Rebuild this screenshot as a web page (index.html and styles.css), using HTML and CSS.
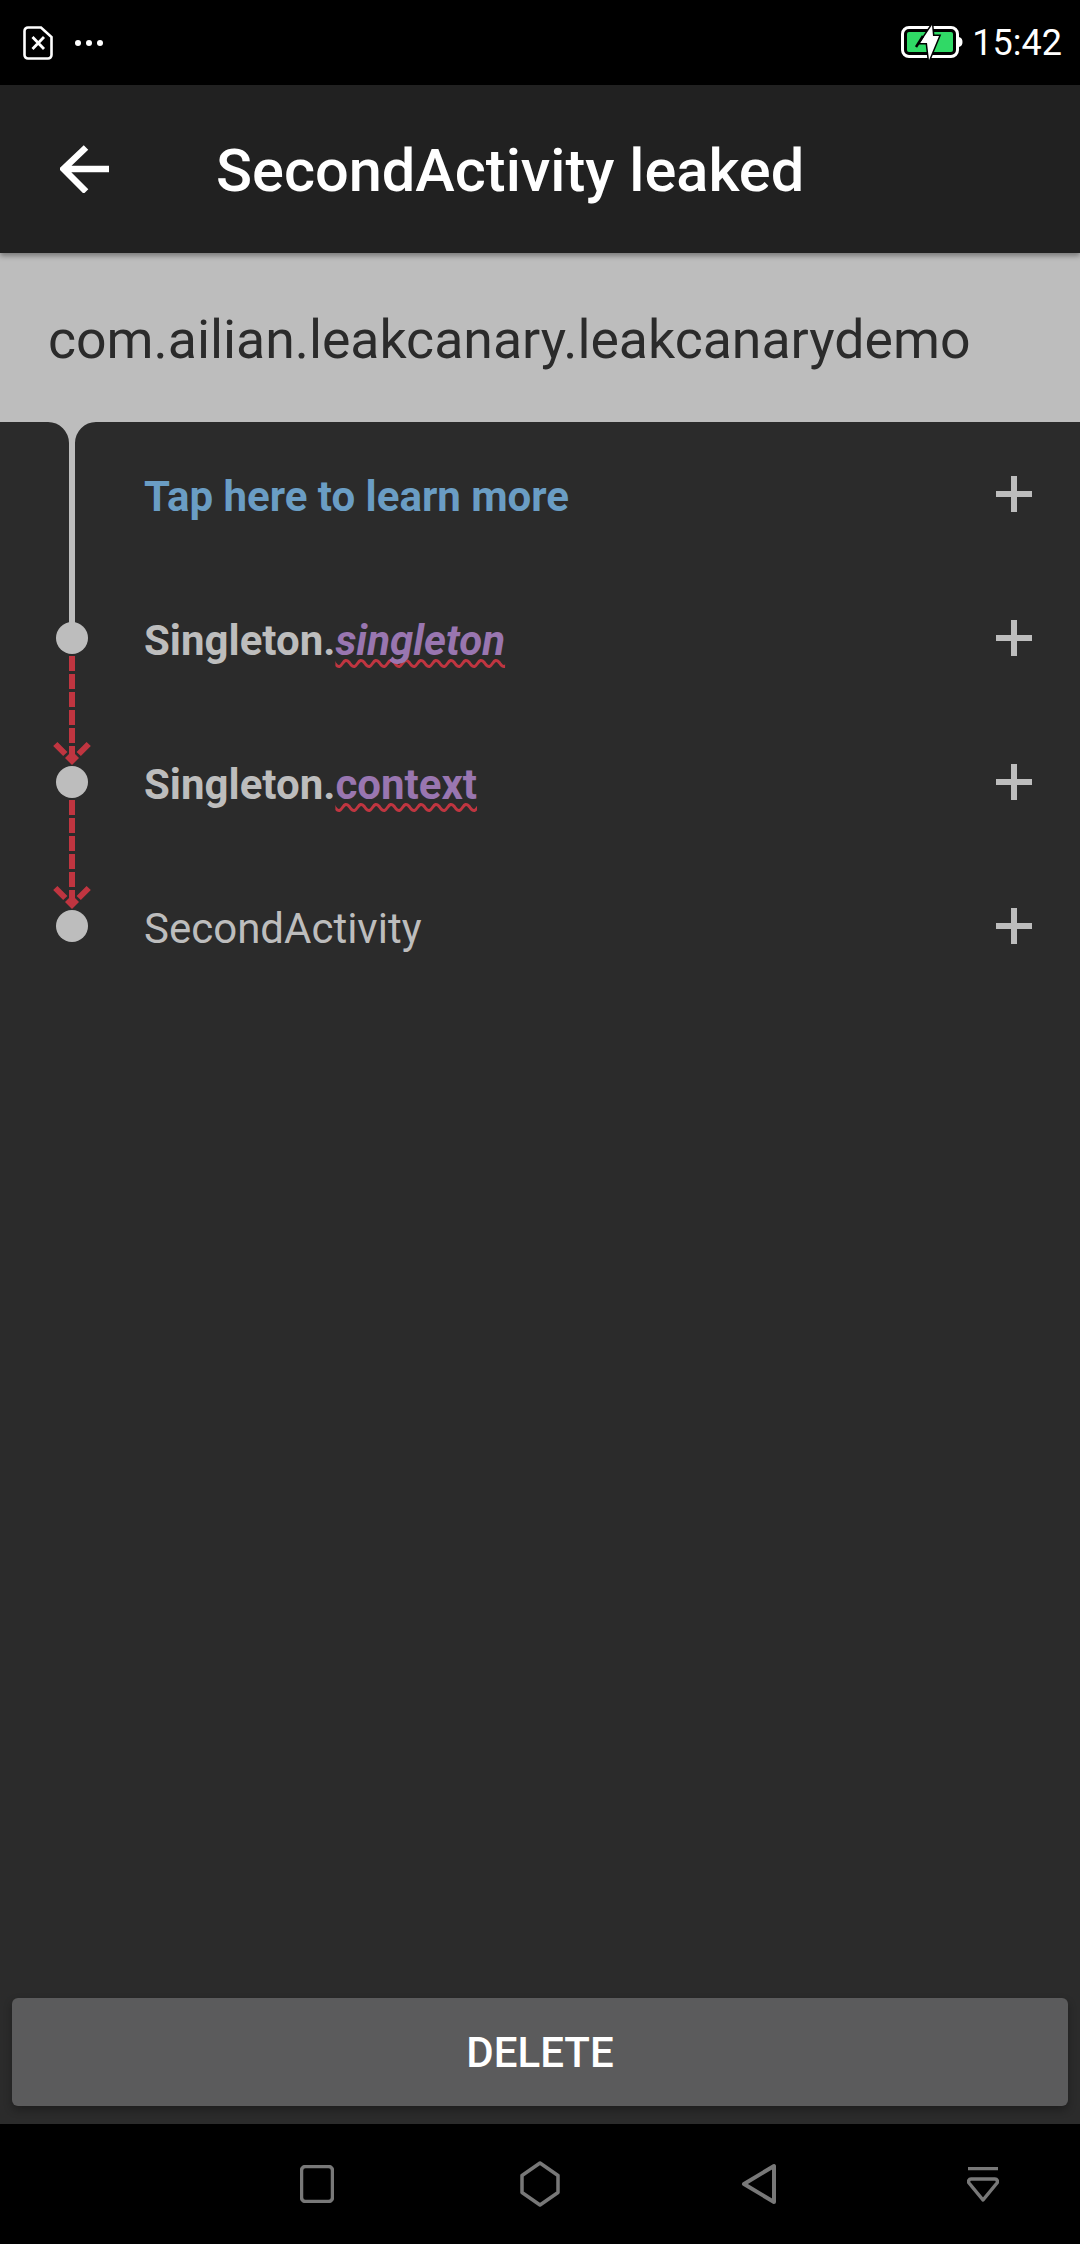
FILE: index.html
```html
<!DOCTYPE html>
<html lang="en">
<head>
<meta charset="utf-8">
<title>SecondActivity leaked</title>
<link rel="stylesheet" href="styles.css">
</head>
<body>
<div class="screen">
  <div class="status">
    <div class="status-left">
      <svg class="ic-file" width="30" height="34" viewBox="0 0 30 34"><path d="M5 1.500H18L28.500 11V29A3.500 3.500 0 0 1 25 32.500H5A3.500 3.500 0 0 1 1.500 29V5A3.500 3.500 0 0 1 5 1.500Z" fill="none" stroke="#fff" stroke-width="2.600"/><path d="M9.500 11L21 23M21 11L9.500 23" stroke="#fff" stroke-width="2.800" fill="none"/></svg>
      <svg class="ic-dots" width="30" height="8" viewBox="0 0 30 8"><circle cx="4" cy="4" r="3" fill="#fff"/><circle cx="15" cy="4" r="3" fill="#fff"/><circle cx="26" cy="4" r="3" fill="#fff"/></svg>
    </div>
    <div class="status-right">
      <svg class="ic-battery" width="62" height="36" viewBox="0 0 62 36"><rect x="1.500" y="2.500" width="55" height="29" rx="6.500" fill="none" stroke="#fff" stroke-width="3"/><rect x="6" y="7" width="46" height="20" rx="2" fill="#30d966"/><path d="M58 12C60.500 12.500 61.500 14.500 61.500 17S60.500 21.500 58 22Z" fill="#fff"/><path d="M31 0L19 18H26L28 35L38 11H32Z" fill="#fff" stroke="#000" stroke-width="3" stroke-linejoin="miter" paint-order="stroke"/><path d="M22 11L15 22" stroke="#000" stroke-width="2.500"/></svg>
      <span class="clock">15:42</span>
    </div>
  </div>
  <header class="toolbar">
    <svg class="ic-back" width="50" height="48" viewBox="0 0 50 48"><path d="M49 24H4M26 2.500L3.500 24L26 46.500" fill="none" stroke="#fff" stroke-width="6.500"/></svg>
    <h1 class="title">SecondActivity leaked</h1>
  </header>
  <div class="package">com.ailian.leakcanary.leakcanarydemo</div>
  <main class="content">
    <ul class="trace">
      <li class="row row-first">
        <svg class="rail" width="144" height="144" viewBox="0 0 144 144"><path d="M48 0A21 21 0 0 1 69 21V144H75V21A21 21 0 0 1 96 0Z" fill="#bdbdbd"/></svg>
        <span class="label link">Tap here to learn more</span>
        <svg class="plus" width="36" height="36" viewBox="0 0 36 36"><path d="M18 0V36M0 18H36" stroke="#bdbdbd" stroke-width="6"/></svg>
      </li>
      <li class="row">
        <svg class="rail" width="144" height="144" viewBox="0 0 144 144"><path d="M72 0V72" stroke="#bdbdbd" stroke-width="6"/><circle cx="72" cy="72" r="16" fill="#bdbdbd"/><path d="M72 90V141" stroke="#c03540" stroke-width="6" stroke-dasharray="15 3"/></svg>
        <span class="label bold">Singleton.<span class="leak italic">singleton</span></span>
        <svg class="plus" width="36" height="36" viewBox="0 0 36 36"><path d="M18 0V36M0 18H36" stroke="#bdbdbd" stroke-width="6"/></svg>
      </li>
      <li class="row">
        <svg class="rail" width="144" height="144" viewBox="0 0 144 144"><path d="M72 0V48" stroke="#c03540" stroke-width="6" stroke-dasharray="15 3"/><path d="M72 41L79 48L72 55L65 48Z" fill="#c03540"/><path d="M55.300 34L65.300 44M88.700 34L78.700 44" stroke="#c03540" stroke-width="6"/><circle cx="72" cy="72" r="16" fill="#bdbdbd"/><path d="M72 90V141" stroke="#c03540" stroke-width="6" stroke-dasharray="15 3"/></svg>
        <span class="label bold">Singleton.<span class="leak">context</span></span>
        <svg class="plus" width="36" height="36" viewBox="0 0 36 36"><path d="M18 0V36M0 18H36" stroke="#bdbdbd" stroke-width="6"/></svg>
      </li>
      <li class="row">
        <svg class="rail" width="144" height="144" viewBox="0 0 144 144"><path d="M72 0V48" stroke="#c03540" stroke-width="6" stroke-dasharray="15 3"/><path d="M72 41L79 48L72 55L65 48Z" fill="#c03540"/><path d="M55.300 34L65.300 44M88.700 34L78.700 44" stroke="#c03540" stroke-width="6"/><circle cx="72" cy="72" r="16" fill="#bdbdbd"/></svg>
        <span class="label">SecondActivity</span>
        <svg class="plus" width="36" height="36" viewBox="0 0 36 36"><path d="M18 0V36M0 18H36" stroke="#bdbdbd" stroke-width="6"/></svg>
      </li>
    </ul>
    <button class="delete" type="button">DELETE</button>
  </main>
  <nav class="navbar">
    <svg class="nav-ic" width="34" height="38" viewBox="0 0 34 38"><rect x="1.500" y="1.500" width="31" height="35" rx="4" fill="none" stroke="#787878" stroke-width="3.500"/></svg>
    <svg class="nav-ic nav-home" width="42" height="46" viewBox="0 0 42 46"><path d="M21 2L39 14.500V31.500L21 44L3 31.500V14.500Z" fill="none" stroke="#787878" stroke-width="3.500" stroke-linejoin="round"/></svg>
    <svg class="nav-ic nav-back" width="36" height="42" viewBox="0 0 36 42"><path d="M33 3V39L3 21Z" fill="none" stroke="#787878" stroke-width="4" stroke-linejoin="round"/></svg>
    <svg class="nav-ic nav-drop" width="32" height="35" viewBox="0 0 32 35"><path d="M1 1.500H31" stroke="#787878" stroke-width="3.500"/><path d="M4 12H28C30 12 31 14 30 16L16 33L2 16C1 14 2 12 4 12Z" fill="none" stroke="#787878" stroke-width="3.500" stroke-linejoin="round"/></svg>
  </nav>
</div>
</body>
</html>
```
FILE: styles.css
```css
* { box-sizing: border-box; }
html, body { margin: 0; padding: 0; background: #000; }
body { font-family: Roboto, "Liberation Sans", sans-serif; }
.screen { width: 1080px; height: 2244px; display: flex; flex-direction: column; overflow: hidden; }

.status { height: 85px; background: #000; display: flex; justify-content: space-between; align-items: center; padding: 0 18px 0 23px; color: #fff; flex: none; }
.status-left { display: flex; align-items: center; gap: 21px; }
.status-right { display: flex; align-items: center; gap: 9px; }
.clock { font-size: 36px; font-weight: 400; line-height: 1; }

.toolbar { height: 168px; background: #212121; display: flex; align-items: center; padding-left: 60px; flex: none; position: relative; z-index: 2; box-shadow: 0 3px 5px rgba(0,0,0,.35); }
.title { margin: 0 0 0 106px; padding-top: 6px; color: #fff; font-size: 59.5px; font-weight: 500; line-height: 1; }

.package { height: 169px; background: #bdbdbd; color: #2b2b2b; font-size: 53.6px; line-height: 173px; padding-left: 48px; flex: none; }

.content { flex: 1; background: #2b2b2b; display: flex; flex-direction: column; justify-content: space-between; padding: 0 12px 18px; }
.trace { list-style: none; margin: 0 -12px; padding: 0; }
.row { height: 144px; display: flex; align-items: center; padding-right: 48px; }
.rail { flex: none; display: block; }
.label { flex: 1; font-size: 42px; padding-top: 5px; color: #bdbdbd; white-space: nowrap; }
.bold { font-weight: 700; }
.link { font-weight: 700; color: #6a9dc4; }
.leak { color: #9976b0; text-decoration: underline wavy #c03540 3px; text-underline-offset: 4px; text-decoration-skip-ink: none; }
.italic { font-style: italic; }
.plus { flex: none; }

.delete { height: 108px; width: 100%; border: 0; border-radius: 6px; padding-top: 2px; background: #5b5b5c; color: #fff; font-family: inherit; font-size: 42px; font-weight: 500; box-shadow: 0 4px 8px rgba(0,0,0,.3); }

.navbar { height: 120px; background: #000; flex: none; display: flex; align-items: center; padding-left: 300px; }
.nav-ic { display: block; }
.nav-home { margin-left: 185px; }
.nav-back { margin-left: 180px; }
.nav-drop { margin-left: 190px; }
```
